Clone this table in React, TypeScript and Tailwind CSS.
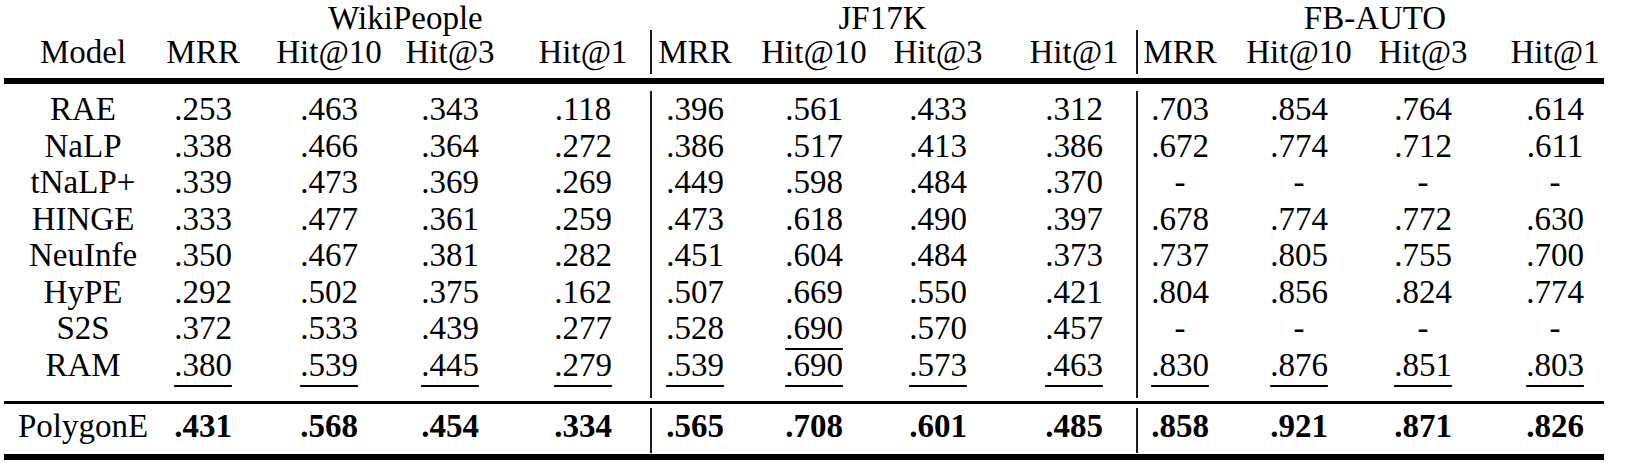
const cellCls = [
  "w-[158px]",
  "w-[80px] ml-[1px]",
  "w-[80px] ml-[46px]",
  "w-[80px] ml-[41px]",
  "w-[80px] ml-[53px]",
  "w-[80px] ml-[3px]",
  "w-[80px] ml-[39px]",
  "w-[80px] ml-[44px]",
  "w-[80px] ml-[56px]",
  "w-[80px] ml-[2px]",
  "w-[80px] ml-[39px]",
  "w-[80px] ml-[44px]",
  "w-[80px] ml-[52px]",
];

const rows: string[][] = [
  ["RAE", ".253", ".463", ".343", ".118", ".396", ".561", ".433", ".312", ".703", ".854", ".764", ".614"],
  ["NaLP", ".338", ".466", ".364", ".272", ".386", ".517", ".413", ".386", ".672", ".774", ".712", ".611"],
  ["tNaLP+", ".339", ".473", ".369", ".269", ".449", ".598", ".484", ".370", "-", "-", "-", "-"],
  ["HINGE", ".333", ".477", ".361", ".259", ".473", ".618", ".490", ".397", ".678", ".774", ".772", ".630"],
  ["NeuInfe", ".350", ".467", ".381", ".282", ".451", ".604", ".484", ".373", ".737", ".805", ".755", ".700"],
  ["HyPE", ".292", ".502", ".375", ".162", ".507", ".669", ".550", ".421", ".804", ".856", ".824", ".774"],
  ["S2S", ".372", ".533", ".439", ".277", ".528", "_.690", ".570", ".457", "-", "-", "-", "-"],
  ["RAM", "_.380", "_.539", "_.445", "_.279", "_.539", "_.690", "_.573", "_.463", "_.830", "_.876", "_.851", "_.803"],
];

const ours = ["PolygonE", ".431", ".568", ".454", ".334", ".565", ".708", ".601", ".485", ".858", ".921", ".871", ".826"];

const header = ["Model", "MRR", "Hit@10", "Hit@3", "Hit@1", "MRR", "Hit@10", "Hit@3", "Hit@1", "MRR", "Hit@10", "Hit@3", "Hit@1"];

function Sep({ cls }: { cls: string }) {
  return <div className={`w-[2px] shrink-0 self-stretch bg-[#1a1a1a] ${cls}`} />;
}

function Row({ values, height, bold = false }: { values: string[]; height: string; bold?: boolean }) {
  return (
    <div className={`flex ${height}`}>
      {values.map((raw, i) => {
        const under = raw.startsWith("_");
        const v = under ? raw.slice(1) : raw;
        return (
          <div key={i} className="contents">
            {i === 5 && <Sep cls="ml-[27px]" />}
            {i === 9 && <Sep cls="ml-[22px]" />}
            <div className={`flex shrink-0 justify-center whitespace-nowrap ${cellCls[i]}`}>
              <span
                className={`${under ? "underline decoration-[1.5px] underline-offset-[9px]" : ""} ${
                  bold && i > 0 ? "font-bold" : ""
                }`}
              >
                {v}
              </span>
            </div>
          </div>
        );
      })}
    </div>
  );
}

function SepGap({ height }: { height: string }) {
  return (
    <div className={`flex ${height}`}>
      <div className="w-[619px] shrink-0" />
      <Sep cls="ml-[27px]" />
      <div className="w-[462px] shrink-0" />
      <Sep cls="ml-[22px]" />
    </div>
  );
}

export default function App() {
  return (
    <div className="h-[468px] w-[1626px] overflow-hidden bg-white">
      <div className="ml-[4px] w-[1600px] font-['Liberation_Serif',serif] text-[33px] text-black">
        {/* group titles */}
        <div className="flex h-[30px] leading-[36.5px]">
          <div className="w-[159px] shrink-0" />
          <div className="flex w-[485px] shrink-0 justify-center whitespace-nowrap">WikiPeople</div>
          <div className="w-[4px] shrink-0" />
          <div className="flex w-[461px] shrink-0 justify-center whitespace-nowrap">JF17K</div>
          <div className="w-[25px] shrink-0" />
          <div className="flex w-[474px] shrink-0 justify-center whitespace-nowrap">FB-AUTO</div>
        </div>

        <div className="leading-[44px]">
          <Row values={header} height="h-[44px]" />
        </div>
        <div className="h-[4px]" />
        <div className="h-[6px] bg-black" />

        {/* results */}
        <div className="h-[7px]" />
        <div className="leading-[36.5px]">
          {rows.map((r) => (
            <Row key={r[0]} values={r} height="h-[36.5px]" />
          ))}
        </div>
        <SepGap height="h-[15px]" />
        <div className="h-[3px]" />
        <div className="h-[3px] bg-black" />

        <div className="h-[4px]" />
        <div className="leading-[36.5px]">
          <Row values={ours} height="h-[36.5px]" bold />
        </div>
        <SepGap height="h-[8px]" />
        <div className="h-[1px]" />
        <div className="h-[6px] bg-black" />
      </div>
    </div>
  );
}
